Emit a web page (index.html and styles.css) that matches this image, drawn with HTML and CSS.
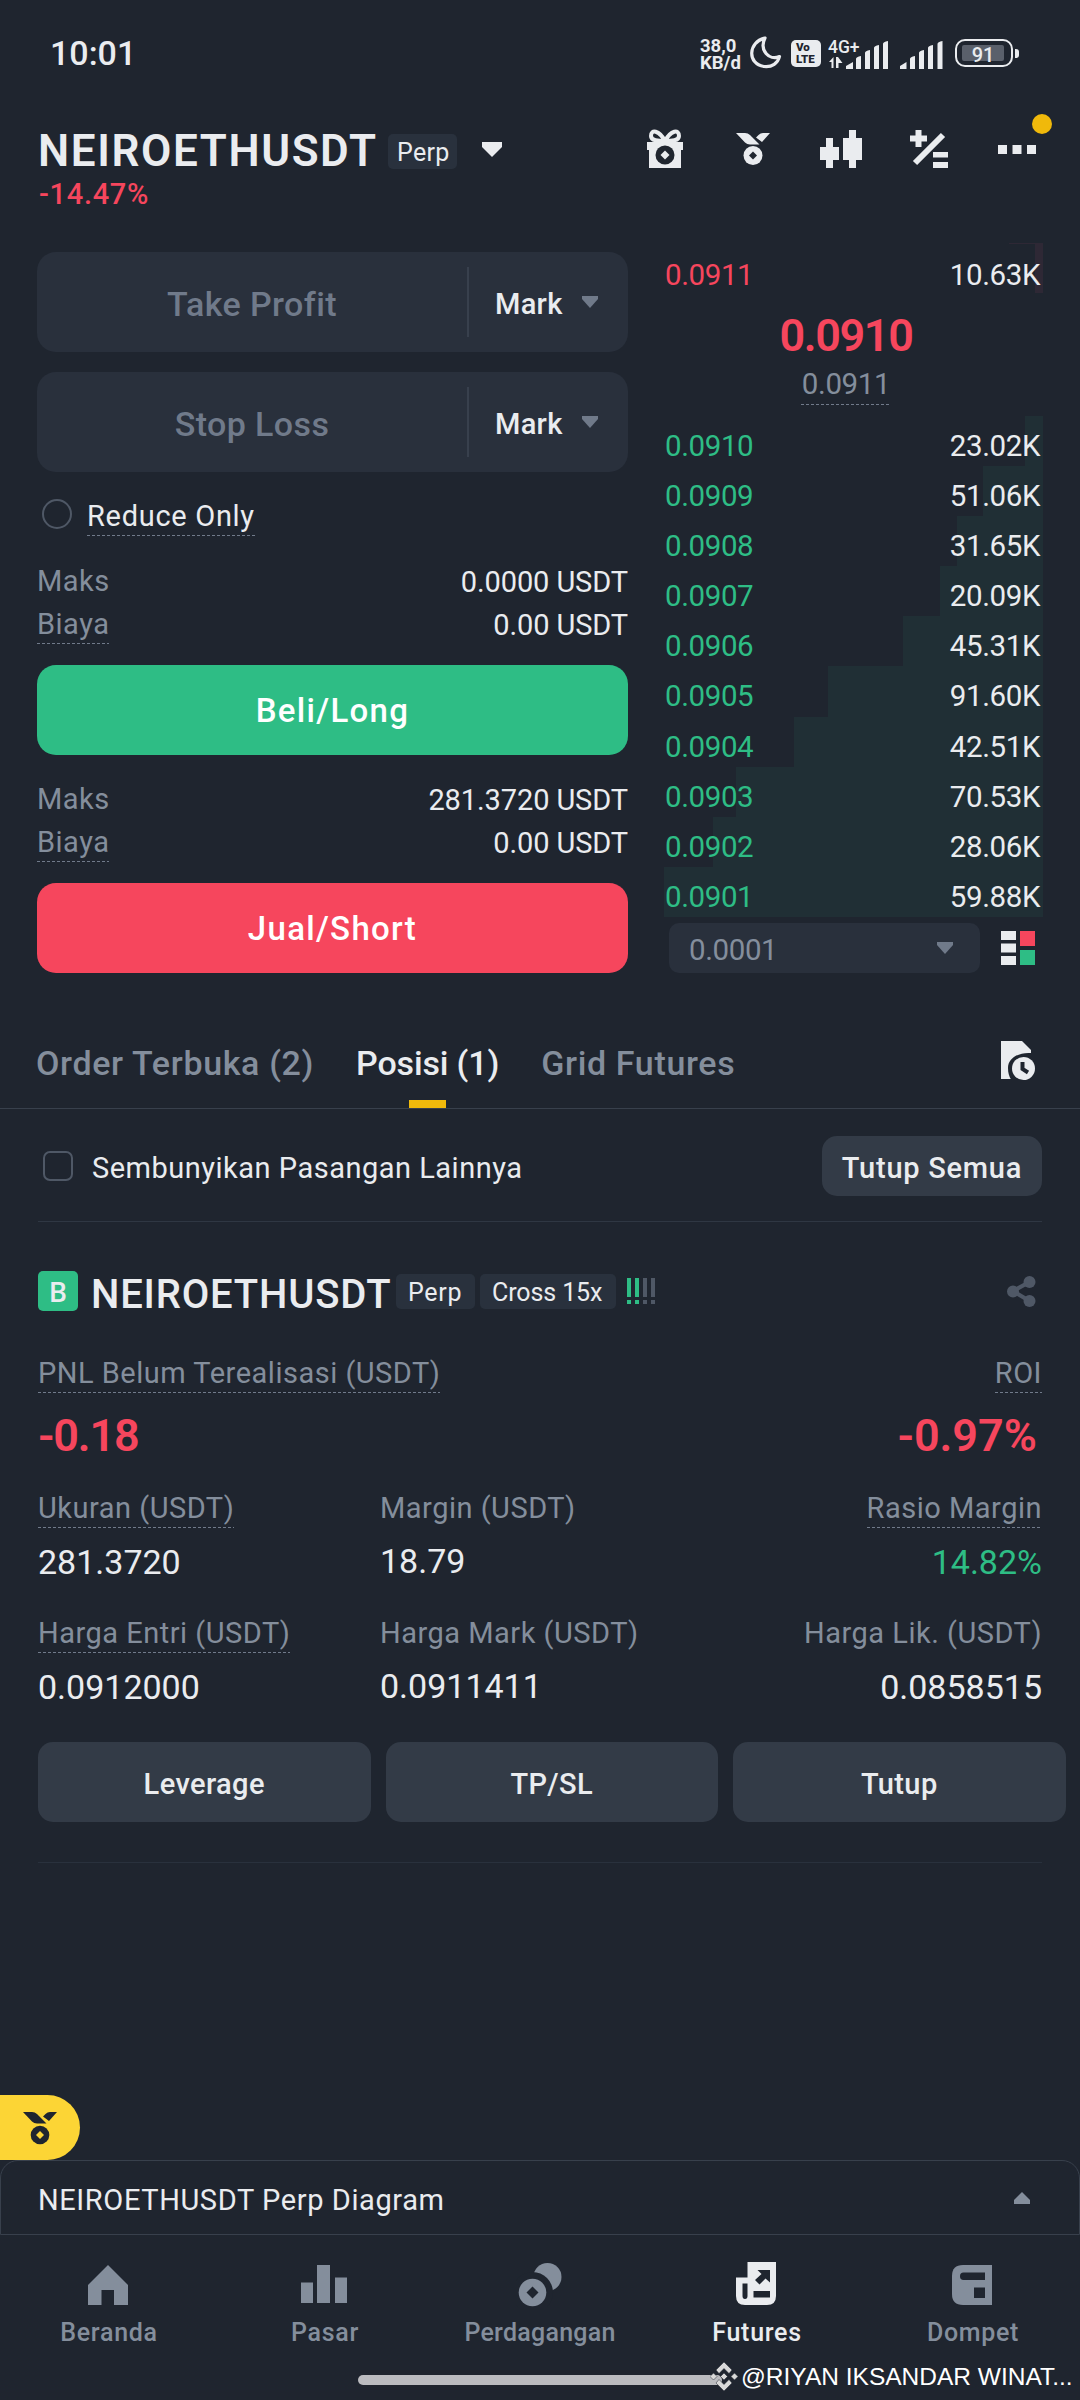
FILE: index.html
```
<!DOCTYPE html>
<html lang="id">

<head>
    <meta charset="UTF-8">
    <title>NEIROETHUSDT Perp</title>
    <link rel="stylesheet" href="styles.css">
</head>

<body>
    <!-- status bar -->
    <div class="status">
        <span class="time">10:01</span>
        <div class="status_icons">
            <div class="speed">38,0<br>KB/d</div>
            <svg class="moon" width="33" height="34" viewBox="0 0 33 34"><path d="M15 2C-2 6-3 28 14 30.500C22 31.500 28 27 29.500 20.500C19 25 9 14 15 2Z" fill="none" stroke="#eaecef" stroke-width="3.200" stroke-linejoin="round"/></svg>
            <div class="volte">Vo<br>LTE</div>
            <svg class="signal" width="60" height="34" viewBox="0 0 60 34">
                <text x="0" y="14.500" class="net">4G+</text>
                <path d="M1 24L5.500 19V30H3.500V24ZM8 19H10L14.500 25H10.500V30H8Z"/>
                <path d="M18 31V28L25 24V31ZM28 31V21Q28 19 33 18V31ZM37 31V15Q37 13 42 12V31ZM46 31V10Q46 8 51 7V31ZM55 31V6Q55 4 60 3V31Z"/>
            </svg>
            <svg class="signal signal_2" width="43" height="34" viewBox="0 0 43 34"><path d="M0 31V28L6.500 24V31ZM10 31V21Q10 19 15 18V31ZM19 31V15Q19 13 24 12V31ZM28 31V10Q28 8 33 7V31ZM37.500 31V6Q37.500 4 42.500 3V31Z"/></svg>
            <div class="battery"><div class="battery_level">91</div></div>
            <i class="battery_tip"></i>
        </div>
    </div>

    <!-- header -->
    <div class="header">
        <div class="pair">
            <h1>NEIROETHUSDT</h1>
            <span class="tag">Perp</span>
            <svg class="pair_arrow" width="20" height="15" viewBox="0 0 20 15"><path d="M0 0H20V5L10 15L0 5Z" fill="#eaecef"/></svg>
        </div>
        <div class="tools">
            <svg width="48" height="48" viewBox="-6 -5 48 48">
                <path d="M0 12H36V20H34V38H2V20H0Z"/>
                <path d="M18 11C12 0 4 -1 4 6C4 11 11 11 18 11C25 11 32 11 32 6C32 -1 24 0 18 11Z" fill="none" stroke="#eaecef" stroke-width="4"/>
                <circle cx="18" cy="25" r="9.500" class="cut"/>
                <path d="M18 20.500L22.500 25L18 29.500L13.500 25Z"/>
            </svg>
            <svg width="48" height="48" viewBox="-7 -8 48 48">
                <path d="M0 0H9Q12 0 14 2L23.500 11.500H14Q11 11.500 9 9.500ZM34 0L26 9L20 4.500L22.500 2Q24.500 0 27 0Z"/>
                <circle cx="17" cy="22.500" r="9.500"/>
                <path d="M17 18.500L21 22.500L17 26.500L13 22.500Z" class="cut"/>
            </svg>
            <svg width="48" height="48" viewBox="-3 -5 48 48"><path d="M6 8H13V17H19V30H13V38H6V30H0V17H6ZM29 0H36V8H42V30H36V38H29V30H23V8H29Z"/></svg>
            <svg width="48" height="48" viewBox="-5 -5 48 48">
                <path d="M5.500 0H11.500V5.500H17V11.500H11.500V17H5.500V11.500H0V5.500H5.500ZM23 22H38V27.500H23ZM23 32H38V38H23Z"/>
                <path d="M5 33L33 5" stroke="#eaecef" stroke-width="6"/>
            </svg>
            <div class="more">
                <svg width="48" height="48" viewBox="-5 -5 48 48"><path d="M0 15H9V24H0ZM14.500 15H23.500V24H14.500ZM29 15H38V24H29Z"/></svg>
            </div>
        </div>
    </div>
    <div class="change">-14.47%</div>

    <!-- order form + order book -->
    <div class="trade">
        <div class="form">
            <div class="field">
                <span class="field_name">Take Profit</span>
                <span class="field_type"><span>Mark</span> <svg width="16" height="12" viewBox="0 0 16 12"><path d="M0 0H16V3L8 12L0 3Z"/></svg></span>
            </div>
            <div class="field">
                <span class="field_name">Stop Loss</span>
                <span class="field_type"><span>Mark</span> <svg width="16" height="12" viewBox="0 0 16 12"><path d="M0 0H16V3L8 12L0 3Z"/></svg></span>
            </div>
            <div class="reduce"><i class="radio"></i><span class="label hint">Reduce Only</span></div>
            <div class="info"><span class="label">Maks</span><span>0.0000 USDT</span></div>
            <div class="info"><span class="label hint">Biaya</span><span>0.00 USDT</span></div>
            <div class="btn btn_buy">Beli/Long</div>
            <div class="info"><span class="label">Maks</span><span>281.3720 USDT</span></div>
            <div class="info"><span class="label hint">Biaya</span><span>0.00 USDT</span></div>
            <div class="btn btn_sell">Jual/Short</div>
        </div>

        <div class="book">
            <div class="ask"><span>0.0911</span><b>10.63K</b></div>
            <div class="mid">
                <div class="last">0.0910</div>
                <span class="index">0.0911</span>
            </div>
            <div class="bid"><i style="width:18px"></i><span>0.0910</span><b>23.02K</b></div>
            <div class="bid"><i style="width:60px"></i><span>0.0909</span><b>51.06K</b></div>
            <div class="bid"><i style="width:86px"></i><span>0.0908</span><b>31.65K</b></div>
            <div class="bid"><i style="width:103px"></i><span>0.0907</span><b>20.09K</b></div>
            <div class="bid"><i style="width:140px"></i><span>0.0906</span><b>45.31K</b></div>
            <div class="bid"><i style="width:215px"></i><span>0.0905</span><b>91.60K</b></div>
            <div class="bid"><i style="width:249px"></i><span>0.0904</span><b>42.51K</b></div>
            <div class="bid"><i style="width:307px"></i><span>0.0903</span><b>70.53K</b></div>
            <div class="bid"><i style="width:330px"></i><span>0.0902</span><b>28.06K</b></div>
            <div class="bid"><i style="width:379px"></i><span>0.0901</span><b>59.88K</b></div>
            <div class="book_foot">
                <div class="step">0.0001 <svg width="16" height="12" viewBox="0 0 16 12"><path d="M0 0H16V3L8 12L0 3Z"/></svg></div>
                <svg width="34" height="34" viewBox="0 0 34 34">
                    <path d="M0 0H15V9H0ZM0 12.500H15V21.500H0ZM0 25H15V34H0Z" fill="#eaecef"/>
                    <path d="M19 0H34V15H19Z" fill="#f6465d"/>
                    <path d="M19 19H34V34H19Z" fill="#2ebd85"/>
                </svg>
            </div>
        </div>
    </div>

    <!-- tabs -->
    <div class="tabs">
        <span>Order Terbuka (2)</span>
        <span class="on">Posisi (1)</span>
        <span>Grid Futures</span>
        <svg width="35" height="40" viewBox="0 0 35 40">
            <path d="M0 0H21L30 9V38H0Z" fill="#eaecef"/>
            <path d="M10 38.500H32V12H30C18 11 7 17 7 27C7 32 8 35 10 38.500Z" fill="#1f252f"/>
            <circle cx="22.500" cy="27.500" r="11.500" fill="#eaecef"/>
            <path d="M21.500 21V28L27 31.500" fill="none" stroke="#1f252f" stroke-width="4"/>
        </svg>
    </div>

    <!-- positions -->
    <div class="filter">
        <i class="checkbox"></i>
        <span>Sembunyikan Pasangan Lainnya</span>
        <div class="close_all">Tutup Semua</div>
    </div>

    <div class="position">
        <div class="position_head">
            <i class="side">B</i>
            <h2>NEIROETHUSDT</h2>
            <span class="tag">Perp</span>
            <span class="tag tag_cross">Cross 15x</span>
            <svg class="risk" width="28" height="26" viewBox="0 0 28 26">
                <path d="M0 0H4V19H0ZM0 22H4V26H0ZM8 0H12V19H8ZM8 22H12V26H8Z" fill="#2ebd85"/>
                <path d="M16 0H20V19H16ZM16 22H20V26H16ZM24 0H28V19H24ZM24 22H28V26H24Z" fill="#4f5866"/>
            </svg>
            <svg class="share" width="29" height="31" viewBox="0 0 29 31">
                <path d="M22.500 6L6 15L22.500 25" fill="none" stroke="#4f5866" stroke-width="4"/>
                <circle cx="22.500" cy="6" r="6"/><circle cx="6" cy="15.500" r="6"/><circle cx="22.500" cy="25" r="6"/>
            </svg>
        </div>
        <div class="pnl">
            <div>
                <span class="label hint">PNL Belum Terealisasi (USDT)</span>
                <p>-0.18</p>
            </div>
            <div class="right">
                <span class="label hint">ROI</span>
                <p class="roi">-0.97%</p>
            </div>
        </div>
        <div class="cells">
            <div><span class="label hint">Ukuran (USDT)</span><p>281.3720</p></div>
            <div><span class="label">Margin (USDT)</span><p>18.79</p></div>
            <div class="right"><span class="label hint">Rasio Margin</span><p class="green">14.82%</p></div>
            <div><span class="label hint">Harga Entri (USDT)</span><p>0.0912000</p></div>
            <div><span class="label">Harga Mark (USDT)</span><p>0.0911411</p></div>
            <div class="right"><span class="label hint hint_none">Harga Lik. (USDT)</span><p>0.0858515</p></div>
        </div>
        <div class="actions">
            <div>Leverage</div>
            <div>TP/SL</div>
            <div>Tutup</div>
        </div>
    </div>

    <!-- bottom -->
    <div class="bottom">
        <div class="medal">
            <svg width="34" height="33" viewBox="0 0 34 33">
                <path d="M0 0H9Q12 0 14 2L23.500 11.500H14Q11 11.500 9 9.500ZM34 0L26 9L20 4.500L22.500 2Q24.500 0 27 0Z"/>
                <circle cx="17" cy="23" r="9.300"/>
                <path d="M17 19L21 23L17 27L13 23Z" fill="#fcd535"/>
            </svg>
        </div>
        <div class="diagram">
            <span>NEIROETHUSDT Perp Diagram</span>
            <svg width="16" height="12" viewBox="0 0 16 12"><path d="M8 0L16 8V12H0V8Z"/></svg>
        </div>
        <div class="nav">
            <div>
                <svg width="48" height="48" viewBox="-4 -6 48 48"><path d="M20 0L40 20V40H26V25H13.500V40H0V20Z"/></svg>
                <span>Beranda</span>
            </div>
            <div>
                <svg width="48" height="48" viewBox="-1 -6 48 48"><path d="M0 17.500H12V38H0ZM16 0H29V38H16ZM34 12.500H46V38H34Z"/></svg>
                <span>Pasar</span>
            </div>
            <div>
                <svg width="48" height="48" viewBox="-3 -4 48 48">
                    <circle cx="28.500" cy="14" r="14"/>
                    <circle cx="13.500" cy="29.500" r="20.500" class="cut"/>
                    <circle cx="13.500" cy="29.500" r="13.800"/>
                    <path d="M13.500 23.500L19.500 29.500L13.500 35.500L7.500 29.500Z" class="cut"/>
                </svg>
                <span class="tight">Perdagangan</span>
            </div>
            <div class="on">
                <svg width="48" height="48" viewBox="-4 -3 48 48">
                    <path d="M11.500 0H40V34Q40 43 31 43H9Q0 43 0 34V15.500H11.500Z"/>
                    <path d="M6.500 21.500H11.500V34Q11.500 37 9 37Q6.500 37 6.500 34ZM17.500 29H34V35.500H17.500ZM21.500 8H34V20.500L29.500 16.500L23.500 22.500L19 18L25.500 12Z" class="cut"/>
                </svg>
                <span>Futures</span>
            </div>
            <div>
                <svg width="48" height="48" viewBox="-4 -6 48 48">
                    <path d="M11 0H40V40H11Q0 40 0 29V11Q0 0 11 0Z"/>
                    <path d="M11.500 7.500H33V15H11.500Q8 15 8 11.200Q8 7.500 11.500 7.500ZM22 22.500H33V33H22Z" class="cut"/>
                </svg>
                <span>Dompet</span>
            </div>
        </div>
        <i class="home_bar"></i>
        <div class="user">
            <svg width="28" height="29" viewBox="0 0 28 29">
                <path d="M14 0L22 8L19 11.500L14 6.500L9 11.500L6 8ZM14 29L22 21L19 17.500L14 22.500L9 17.500L6 21ZM14 11L17.500 14.500L14 18L10.500 14.500ZM3.500 11L7 14.500L3.500 18L0 14.500ZM24.500 11L28 14.500L24.500 18L21 14.500Z"/>
            </svg>
            <span>@RIYAN IKSANDAR WINAT...</span>
        </div>
    </div>
</body>

</html>
```
FILE: styles.css
```
* {
    box-sizing: border-box;
    margin: 0;
    padding: 0;
}

body {
    width: 1080px;
    height: 2400px;
    display: flex;
    flex-direction: column;
    overflow: hidden;
    background-color: #1f252f;
    color: #eaecef;
    font-family: Roboto, sans-serif;
    font-size: 29px;
    white-space: nowrap;
}

i, b {
    font-style: normal;
    font-weight: normal;
}

svg {
    display: block;
    flex: none;
    fill: #eaecef;
}

.cut {
    fill: #1f252f;
}

/* status bar */
.status {
    height: 106px;
    padding: 0 61px 0 50px;
    display: flex;
    align-items: center;
    justify-content: space-between;
}

.time {
    font-size: 34px;
    font-weight: 500;
}

.status_icons {
    display: flex;
    align-items: center;
}

.speed {
    width: 50px;
    font-size: 18.5px;
    line-height: 17px;
    font-weight: 700;
    padding-top: 3px;
}

.volte {
    width: 30px;
    height: 27px;
    margin: 1px 7px 0 8px;
    padding: 2px 0 0 5px;
    border-radius: 5px;
    background-color: #eaecef;
    color: #1f252f;
    font-size: 11.500px;
    line-height: 11.500px;
    font-weight: 900;
}

.signal {
    margin-top: 4px;
    overflow: visible;
}

.net {
    font-size: 17.500px;
    font-weight: 500;
}

.signal_2 {
    margin: 4px 12px 0;
}

.battery {
    width: 58px;
    height: 28px;
    padding: 4px 6px 4px 5px;
    border: 2px solid #eaecef;
    border-radius: 10px;
}

.battery_level {
    width: 42px;
    height: 16px;
    border-radius: 2px;
    background-color: #5a606b;
    font-size: 20px;
    line-height: 20px;
    font-weight: 500;
    text-align: center;
}

.battery_tip {
    width: 4px;
    height: 9px;
    margin-left: 2px;
    border-radius: 0 3px 3px 0;
    background-color: #eaecef;
}

/* header */
.header {
    height: 70px;
    padding: 21px 39px 0 38px;
    display: flex;
    justify-content: space-between;
}

.pair {
    display: flex;
    align-items: center;
    height: 48px;
}

.pair h1 {
    width: 350px;
    font-size: 44px;
    font-weight: 600;
    letter-spacing: 1.600px;
}

.tag {
    width: 69px;
    height: 35px;
    padding: 0 9px;
    border-radius: 5px;
    background-color: #29313d;
    font-size: 25px;
    line-height: 37px;
    letter-spacing: .3px;
}

.pair_arrow {
    margin-left: 25px;
    margin-top: -4px;
}

.tools {
    display: flex;
    gap: 40px;
    margin-top: -2px;
}

.more {
    position: relative;
}

.more::after {
    content: "";
    position: absolute;
    top: -11px;
    right: -11px;
    width: 20px;
    height: 20px;
    border-radius: 50%;
    background-color: #f0b90b;
}

.change {
    padding-left: 39px;
    color: #f6465d;
    line-height: 36px;
    font-weight: 500;
    letter-spacing: .7px;
}

/* trade */
.trade {
    display: flex;
    justify-content: space-between;
    padding: 0 37px;
    margin-top: 31px;
    height: 730px;
}

.form {
    width: 591px;
    padding-top: 9px;
}

.field {
    display: flex;
    align-items: center;
    height: 100px;
    margin-bottom: 20px;
    border-radius: 19px;
    background-color: #29303c;
    font-weight: 500;
}

.field_name {
    width: 430px;
    line-height: 100px;
    padding-top: 3px;
    text-align: center;
    color: #707a8a;
    font-size: 34px;
    letter-spacing: .4px;
}

.field_type {
    display: flex;
    align-items: center;
    justify-content: space-between;
    width: 131px;
    height: 70px;
    padding-left: 26px;
    border-left: 2px solid #38404d;
    letter-spacing: .3px;
}

.field_type span {
    padding-top: 3px;
}

.field_type svg, .step svg {
    fill: #707a8a;
}

.reduce {
    display: flex;
    margin: 25px 0;
    height: 40px;
    padding-left: 5px;
}

.radio {
    width: 30px;
    height: 30px;
    margin: 2px 15px 0 0;
    border: 2px solid #4f5866;
    border-radius: 50%;
}

.label {
    display: inline-block;
    color: #848e9c;
    line-height: 38px;
    letter-spacing: .5px;
    vertical-align: top;
}

/* dashed underline of labels with an explanation */
.hint {
    height: 39px;
    background: repeating-linear-gradient(90deg, #707a8a 0 3px, transparent 3px 5px) left bottom / 100% 1.500px no-repeat;
}

.hint_none {
    background: none;
}

.reduce .label {
    color: #eaecef;
    letter-spacing: .7px;
}

.info {
    display: flex;
    justify-content: space-between;
    height: 38px;
    margin-bottom: 5px;
    line-height: 40px;
    letter-spacing: -.1px;
}

.btn {
    height: 90px;
    margin: 22px 0 25px;
    border-radius: 19px;
    color: #fff;
    font-size: 33px;
    line-height: 92px;
    font-weight: 500;
    letter-spacing: 1.300px;
    text-align: center;
}

.btn_buy {
    background-color: #2ebd85;
}

.btn_sell {
    background-color: #f6465d;
}

/* order book */
.book {
    width: 379px;
    font-size: 29.500px;
}

.ask, .bid {
    position: relative;
    display: flex;
    justify-content: space-between;
    height: 50.100px;
    padding: 0 3px 0 1px;
    line-height: 60px;
    letter-spacing: -.400px;
}

.ask span {
    color: #f6465d;
}

.bid span {
    color: #2ebd85;
}

.ask b, .bid b, .ask span, .bid span {
    position: relative;
}

.ask {
    height: 50px;
    line-height: 64px;
    background: linear-gradient(#2e2835, #2e2835) right top / 8px 100% no-repeat, linear-gradient(#2e2835, #2e2835) right top / 34px 1px no-repeat;
}

/* depth */
.bid i {
    position: absolute;
    top: 0;
    right: 0;
    height: 100%;
    background-color: #202f35;
}

.mid {
    height: 123px;
    padding: 13px 15px 0 0;
    text-align: center;
}

.last {
    color: #f6465d;
    font-size: 45px;
    line-height: 59px;
    font-weight: 600;
    letter-spacing: -1.400px;
}

.index {
    display: inline-block;
    height: 40px;
    line-height: 38px;
    color: #848e9c;
    letter-spacing: -.4px;
    padding: 0 1px;
    vertical-align: top;
    background: repeating-linear-gradient(90deg, #707a8a 0 3px, transparent 3px 5px) left bottom / 100% 1.500px no-repeat;
}

.book_foot {
    display: flex;
    align-items: center;
    justify-content: space-between;
    height: 50px;
    margin-top: 6px;
    padding: 0 8px 0 5px;
}

.step {
    display: flex;
    align-items: center;
    justify-content: space-between;
    width: 311px;
    height: 50px;
    padding: 4px 27px 0 20px;
    border-radius: 10px;
    background-color: #29303c;
    color: #848e9c;
    letter-spacing: -.4px;
}

.step svg {
    margin-top: -4px;
}

/* tabs */
.tabs {
    display: flex;
    align-items: center;
    gap: 42px;
    height: 91px;
    margin-top: 45px;
    padding: 0 44px 0 36px;
    border-bottom: 1px solid #38404c;
    color: #848e9c;
    font-size: 34px;
    line-height: 90px;
    font-weight: 500;
    letter-spacing: .650px;
}

.tabs .on {
    position: relative;
    color: #eaecef;
    letter-spacing: -.150px;
}

.tabs .on::after {
    content: "";
    position: absolute;
    left: 50%;
    bottom: 0;
    width: 37px;
    height: 8px;
    margin-left: -19px;
    background-color: #f0b90b;
}

.tabs svg {
    margin-left: auto;
    margin-top: -4px;
}

/* filter */
.filter {
    display: flex;
    align-items: center;
    height: 113px;
    margin: 0 38px;
    padding: 2px 0 0 5px;
    border-bottom: 1px solid #2f3743;
}

.checkbox {
    width: 30px;
    height: 30px;
    margin-right: 19px;
    border: 2px solid #4f5866;
    border-radius: 7px;
}

.filter span {
    padding-top: 4px;
    letter-spacing: .5px;
}

.close_all {
    width: 220px;
    height: 60px;
    margin-left: auto;
    border-radius: 15px;
    background-color: #333b47;
    line-height: 64px;
    font-weight: 500;
    letter-spacing: .75px;
    text-align: center;
}

/* position */
.position {
    height: 641px;
    margin: 0 38px;
    border-bottom: 1px solid #29313d;
}

.position_head {
    display: flex;
    align-items: center;
    height: 40px;
    margin-top: 49px;
}

.side {
    width: 40px;
    height: 40px;
    border-radius: 5px;
    background-color: #2ebd85;
    font-size: 28px;
    line-height: 43px;
    font-weight: 500;
    text-align: center;
}

.position_head h2 {
    width: 305px;
    padding: 7px 0 0 13px;
    margin-right: 13px;
    font-size: 40px;
    font-weight: 500;
    letter-spacing: .8px;
}

.position_head .tag {
    letter-spacing: .7px;
    padding: 0 12px;
    width: 79px;
}

.position_head .tag_cross {
    width: 136px;
    margin-left: 5px;
    letter-spacing: -.100px;
}

.risk {
    margin-left: 11px;
}

.share {
    margin-left: auto;
    margin-right: 6px;
    fill: #4f5866;
}

.right {
    text-align: right;
}

.pnl {
    display: flex;
    justify-content: space-between;
    margin-top: 43px;
    height: 135px;
}

.pnl p {
    margin-top: 13px;
    color: #f6465d;
    font-size: 45px;
    line-height: 60px;
    font-weight: 600;
    letter-spacing: -1.200px;
}

.pnl .roi {
    margin-right: 5px;
    letter-spacing: 0;
}

.cells {
    display: grid;
    grid-template-columns: 342px 1fr 1fr;
    grid-auto-rows: 125px;
}

.cells p {
    margin-top: 12px;
    font-size: 34px;
    line-height: 44px;
}

.cells .green {
    color: #2ebd85;
}

.actions {
    display: grid;
    grid-template-columns: 332.500px 332.500px 332.500px;
    gap: 15px;
    margin-top: 3px;
}

.actions div {
    height: 80px;
    border-radius: 15px;
    background-color: #333b47;
    line-height: 84px;
    font-weight: 500;
    letter-spacing: .4px;
    text-align: center;
}

/* bottom */
.bottom {
    position: relative;
    height: 305px;
    margin-top: auto;
}

.medal {
    width: 80px;
    height: 65px;
    padding: 17px 0 0 23px;
    border-radius: 0 33px 33px 0;
    background-color: #fcd535;
}

.medal svg {
    fill: #1f252f;
}

.diagram {
    display: flex;
    align-items: center;
    justify-content: space-between;
    height: 75px;
    padding: 0 49px 0 37px;
    border: 1px solid #38404c;
    border-radius: 18px 18px 0 0;
    letter-spacing: .6px;
}

.diagram span {
    padding-top: 4px;
}

.diagram svg {
    fill: #848e9c;
}

.nav {
    display: grid;
    grid-template-columns: repeat(5, 1fr);
    padding-top: 24px;
}

.nav div {
    display: flex;
    flex-direction: column;
    align-items: center;
    color: #848e9c;
    font-size: 25px;
    line-height: 30px;
    font-weight: 500;
    letter-spacing: .700px;
}

.nav span {
    padding: 11px 0 0 2px;
}

.nav .tight {
    padding-left: 0;
    letter-spacing: .25px;
}

.nav svg {
    fill: #848e9c;
}

.nav .on {
    color: #eaecef;
}

.nav .on svg {
    fill: #eaecef;
}

.nav svg .cut {
    fill: #1f252f;
}

.home_bar {
    position: absolute;
    left: 358px;
    bottom: 15px;
    width: 364px;
    height: 10px;
    border-radius: 5px;
    background-color: #bbbcc0;
}

.user {
    position: absolute;
    left: 710px;
    bottom: 9px;
    display: flex;
    align-items: center;
    gap: 3px;
    color: #fff;
    font-family: "Liberation Sans", Arial, sans-serif;
    font-size: 24.500px;
    line-height: 28px;
}

.user svg {
    fill: #d9d9d9;
    stroke: #1f252f;
    stroke-width: .5;
}
```
